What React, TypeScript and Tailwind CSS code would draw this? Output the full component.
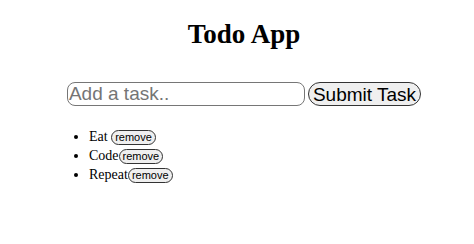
import { useState } from "react";

const App = () => {
  const [tasks, setTasks] = useState(["Eat ", "Code", "Repeat"]);
  const [text, setText] = useState("");

  const addTask = (e: React.FormEvent) => {
    e.preventDefault();
    if (!text.trim()) return;
    setTasks([...tasks, text.trim()]);
    setText("");
  };

  return (
    <div className="min-h-screen bg-white pl-[14px] text-black">
      <div className="flex flex-col items-center">
        <h1 className="mt-[18px] font-['Liberation_Serif',serif] text-[27px] font-bold leading-[32px]">
          Todo App
        </h1>
        <form onSubmit={addTask} className="mt-[32px] flex items-center gap-[3px]">
          <input
            value={text}
            onChange={(e) => setText(e.target.value)}
            placeholder="Add a task.."
            className="h-[24px] w-[238px] rounded-[8px] border border-[#767676] px-[1px] font-['Liberation_Sans',Arial,sans-serif] text-[19px] leading-none placeholder:text-[#757575]"
          />
          <button
            type="submit"
            className="h-[24px] rounded-[12px] border border-[#333] bg-[#efefef] px-[4px] font-['Liberation_Sans',Arial,sans-serif] text-[19px] leading-none"
          >
            Submit Task
          </button>
        </form>
      </div>
      <ul className="ml-[35px] mt-[21px] list-disc pl-[40px] font-['Liberation_Serif',serif] text-[14px] leading-[19px]">
        {tasks.map((t, i) => (
          <li key={i} className="whitespace-pre">
            {t}
            <button
              onClick={() => setTasks(tasks.filter((_, j) => j !== i))}
              className="rounded-full border border-[#333] bg-[#efefef] px-[3px] font-['Liberation_Sans',Arial,sans-serif] text-[11px] leading-[13px]"
            >
              remove
            </button>
          </li>
        ))}
      </ul>
    </div>
  );
};

export default App;
